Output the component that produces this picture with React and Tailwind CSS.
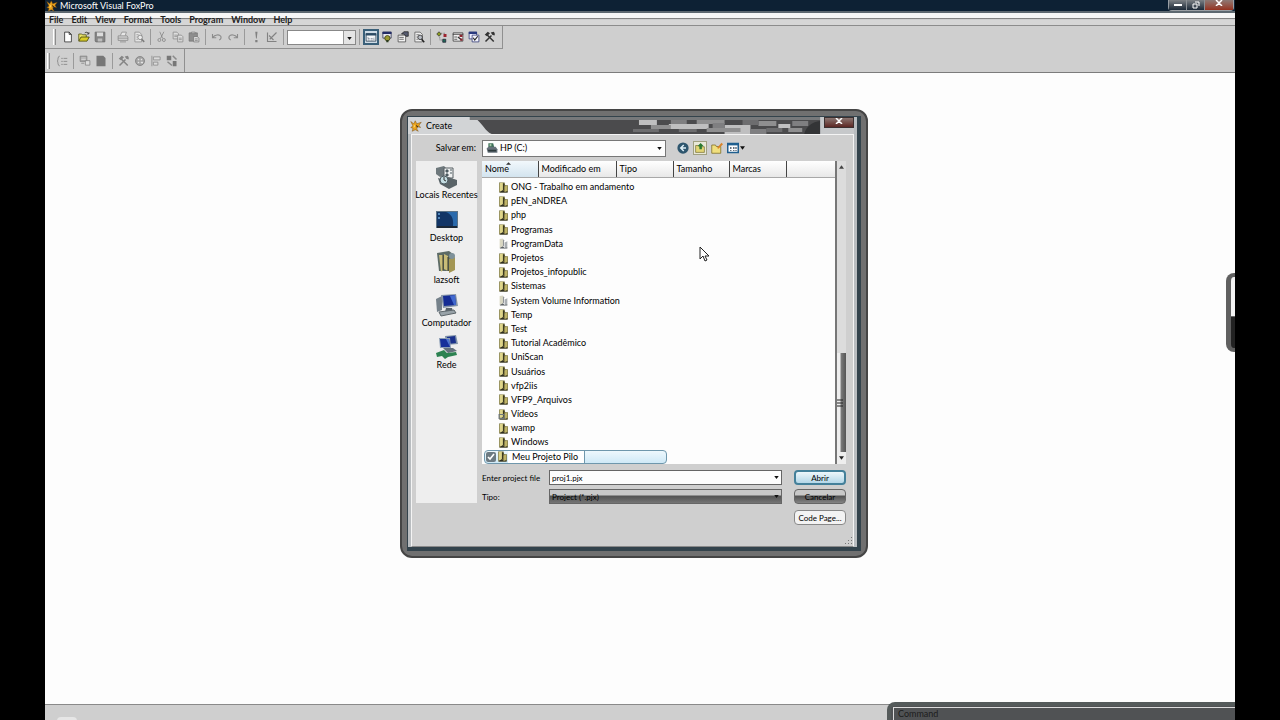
import React from "react";

const menus = ["File", "Edit", "View", "Format", "Tools", "Program", "Window", "Help"];

const folders = [
  { name: "ONG - Trabalho em andamento" },
  { name: "pEN_aNDREA" },
  { name: "php" },
  { name: "Programas" },
  { name: "ProgramData", hidden: true },
  { name: "Projetos" },
  { name: "Projetos_infopublic" },
  { name: "Sistemas" },
  { name: "System Volume Information", hidden: true },
  { name: "Temp" },
  { name: "Test" },
  { name: "Tutorial Acadêmico" },
  { name: "UniScan" },
  { name: "Usuários" },
  { name: "vfp2iis" },
  { name: "VFP9_Arquivos" },
  { name: "Vídeos", media: true },
  { name: "wamp" },
  { name: "Windows" },
];

const columns = [
  { name: "Nome", width: "w-[56px]" },
  { name: "Modificado em", width: "w-[78px]" },
  { name: "Tipo", width: "w-[57px]" },
  { name: "Tamanho", width: "w-[56px]" },
  { name: "Marcas", width: "w-[57px]" },
];

/* Toolbar glyphs, all on a 16x16 grid */
const glyphs = {
  new: <path d="M3.5 1.5h6l3 3v10h-9zM9.5 1.5v3h3" fill="#fff" stroke="#222" />,
  open: (
    <>
      <path d="M1 13V4h4l1 1h5v3" fill="#e8e36a" stroke="#4a4a10" />
      <path d="M1 13.5L4 8h11l-3 5.500z" fill="#d8cc28" stroke="#3c3c08" />
      <path d="M9 2.500c2-1.500 4-1 5 1M14.500 1.500V4H12" fill="none" stroke="#222" />
    </>
  ),
  save: (
    <>
      <path d="M1.500 1.500h13v13h-12l-1-1z" fill="#858585" stroke="#6a6a6a" />
      <path d="M4 2h8v5H4z" fill="#dcdcdc" />
      <path d="M5 10h6v4H5z" fill="#bdbdbd" />
    </>
  ),
  print: (
    <>
      <path d="M4.500 6l2-4.500h6L11 6" fill="#e6e6e6" stroke="#8a8a8a" />
      <path d="M1.500 6.500h12l1 2v4h-13zM1.500 9.500h13M4 14.500h8" fill="#d4d4d4" stroke="#858585" />
    </>
  ),
  preview: (
    <>
      <path d="M2.500 1.500h6l3 3v10h-9zM4.500 5h3M4.500 8h2M4.500 11h2" fill="#e4e4e4" stroke="#8a8a8a" />
      <circle cx="9.500" cy="8.500" r="3" fill="#ececec" stroke="#7a7a7a" />
      <path d="M11.500 11l3.500 3.500" stroke="#7a7a7a" strokeWidth="2" />
    </>
  ),
  cut: (
    <g fill="none" stroke="#828282">
      <path d="M5 1l4 9M10.500 1L6 10" />
      <circle cx="4.500" cy="12" r="2" />
      <circle cx="10.500" cy="12" r="2" />
    </g>
  ),
  copy: (
    <g fill="#dedede" stroke="#868686">
      <path d="M1.500 1.500h5l2 2v7h-7zM3 5.500h4M3 7.500h4" />
      <path d="M7.500 5.500h5l2 2v7h-7zM9 9.500h4M9 11.500h4" />
    </g>
  ),
  paste: (
    <g stroke="#747474">
      <path d="M1.500 2.500h11v11h-11z" fill="#8e8e8e" />
      <path d="M4.500 1.500h5v2h-5z" fill="#ddd" />
      <path d="M7.500 7.500h5l2 2v5h-7zM9 10.500h4M9 12.500h4" fill="#e4e4e4" />
    </g>
  ),
  undo: <path d="M2 4v5h5M2.500 8.500C5 5 11 4 13 7c1 2 0 4-2 5" fill="none" stroke="#8c8c8c" strokeWidth="1.500" />,
  redo: <path d="M14 4v5H9M13.500 8.500C11 5 5 4 3 7c-1 2 0 4 2 5" fill="none" stroke="#8c8c8c" strokeWidth="1.500" />,
  run: <path d="M7 1h3l-1 9H8zM7 12h3v3H7z" fill="#808080" />,
  modify: (
    <g fill="none" stroke="#828282" strokeWidth="1.500">
      <path d="M2 2v12h12" />
      <path d="M14 2L5 11M4 6l6 6M5 14h8" />
    </g>
  ),
  form: (
    <>
      <path d="M1.500 3.500h13v10h-13z" fill="#f4f6f8" stroke="#1d3346" />
      <path d="M1 3h14v3H1z" fill="#2a4a63" />
      <path d="M4 8v4h8V8M4 10h8" fill="none" stroke="#5a6a78" strokeDasharray="1 1" />
    </>
  ),
  data: (
    <>
      <path d="M2.500 1.500h11v8h-11z" fill="#e8e8f0" stroke="#222848" />
      <path d="M2 1h12v3H2z" fill="#232c66" />
      <circle cx="8.500" cy="9.500" r="3.500" fill="#9a9a32" stroke="#3c3c10" />
      <path d="M7 12h3v3H7z" fill="#2c3c20" />
    </>
  ),
  properties: (
    <>
      <path d="M1.500 5.500h10v9h-10zM3 8.500h6M3 11h6" fill="#f2f2f2" stroke="#444" />
      <path d="M6 4l3-3h6v6h-3L9 4z" fill="#555b70" stroke="#222" />
    </>
  ),
  docview: (
    <>
      <path d="M2.500 1.500h7l3 3v10h-10zM4.500 5h4M4.500 8h2M4.500 11h2" fill="#eee" stroke="#555" />
      <circle cx="9.500" cy="8.500" r="3" fill="#b8bcc4" stroke="#222" />
      <path d="M11.500 11l3.500 4" stroke="#222" strokeWidth="2" />
    </>
  ),
  classes: (
    <>
      <path d="M1 4l3-3 3 3-3 3z" fill="#8a9a20" stroke="#333" />
      <path d="M10 4h4v4h-4z" fill="#9c2430" />
      <path d="M9 11h4v4H9z" fill="#1f6a58" stroke="#223" />
      <path d="M5 8v4h3M7 3h5" fill="none" stroke="#555" strokeDasharray="1 1" />
    </>
  ),
  builder: (
    <>
      <path d="M1.500 2.500h13v11h-13zM1 4.500h14" fill="#f0f0f0" stroke="#333" />
      <path d="M3 8h4M3 11h4" stroke="#333" />
      <path d="M8 8l5 4" stroke="#333" strokeWidth="2" />
      <path d="M10 5h4v3h-4zM11 10h3v3h-3z" fill="#8c2630" />
    </>
  ),
  windows: (
    <>
      <path d="M1.500 1.500h10v9h-10z" fill="#eef" stroke="#2a3370" />
      <path d="M1 1h11v3H1z" fill="#2a3a80" />
      <path d="M5.500 5.500h9v9h-9z" fill="#f4f4fc" stroke="#2a3370" />
      <path d="M7 9l2 3 4-5" fill="none" stroke="#222" strokeWidth="1.500" />
    </>
  ),
  tools: (
    <>
      <path d="M2 14L10 6M3 4l10 10" stroke="#333" strokeWidth="2" />
      <path d="M1 5l4-4 3 2-4 4zM9 2l2 3 3 1c1-2 0-4-1-5" fill="#333" />
    </>
  ),
  list: <path d="M5 1.500c-3 0-2 5-3 6.500 1 1.500 0 6.500 3 6.500M7 4.500h2M7 8.500h2M7 12.500h2M10 4.500h5M10 8.500h5M10 12.500h5" fill="none" stroke="#7c7c7c" />,
  frames: (
    <g stroke="#808080">
      <path d="M1.500 1.500h9v7h-9z" fill="#a6a6a6" />
      <path d="M3 4h6M3 6h6" stroke="#ddd" />
      <path d="M8.500 7.500h6v6h-6zM3 11h4" fill="#dcdcdc" />
    </g>
  ),
  page: <path d="M2 1h9l3 3v11H2z" fill="#777" />,
  toolsOff: (
    <>
      <path d="M2 14L10 6M3 4l10 10" stroke="#858585" strokeWidth="2" />
      <path d="M1 5l4-4 3 2-4 4zM9 2l2 3 3 1c1-2 0-4-1-5" fill="#858585" />
    </>
  ),
  palette: (
    <>
      <circle cx="8" cy="8" r="6" fill="#a2a2a2" stroke="#7a7a7a" />
      <path d="M5 5h2v2H5zM9 5h2v2H9zM5 9h2v2H5zM9 9h3v2H9z" fill="#e4e4e4" />
    </>
  ),
  align: <path d="M2.500 1v14M4.500 2.500h9v4h-9zM4.500 9.500h6v4h-6z" fill="#dadada" stroke="#868686" />,
  blocks: (
    <>
      <path d="M1 1h6v6H1zM9 8h5v7H9z" fill="#777" />
      <path d="M9 1l5 5M2 9l6 5" stroke="#8a8a8a" strokeWidth="2" />
    </>
  ),
};

const mainTools = [["new", "open", "save"], ["print", "preview"], ["cut", "copy", "paste"], ["undo", "redo"], ["run", "modify"]];
const viewTools = [["form", "data", "properties", "docview"], ["classes", "builder", "windows", "tools"]];
const reportTools = [["list"], ["frames", "page"], ["toolsOff", "palette", "align", "blocks"]];

function ToolGroup({ names }) {
  return (
    <div className="flex items-center">
      {names.map((name) => (
        <button
          key={name}
          aria-label={name}
          className={name === "form" ? "w-4 h-4 flex items-center justify-center border-2 border-[#3a6079] bg-[#cfdce6]" : "w-4 h-4 flex items-center justify-center"}
        >
          <svg viewBox="0 0 16 16" className="w-3 h-3 shrink-0">{glyphs[name]}</svg>
        </button>
      ))}
    </div>
  );
}

function Separator() {
  return <span className="w-px h-4 mx-[3px] bg-[#9a9a9a]"></span>;
}

function ToolGroups({ groups }) {
  return groups.map((names, index) => (
    <React.Fragment key={index}>
      {index > 0 && <Separator />}
      <ToolGroup names={names} />
    </React.Fragment>
  ));
}

function Grip() {
  return <span className="w-[3px] h-4 mr-1 border-x border-l-white border-r-[#8c8c8c]"></span>;
}

function FoxIcon() {
  return (
    <svg viewBox="0 0 16 16" className="w-3 h-3 shrink-0">
      <path d="M1 2l4 3 2-4 2 4 6-2-3 4 2 3-4-1-1 3 2 3-4-2-4 2 1-4-3-1 3-2z" fill="#e9a21c" stroke="#6b4310" strokeWidth=".6" />
      <path d="M8 6l3 3-2 1z" fill="#3a2510" />
      <path d="M5 6l2 2-2 3z" fill="#ffd96a" />
    </svg>
  );
}

function FolderIcon({ hidden, media }) {
  return (
    <svg viewBox="0 0 20 20" className="w-[11px] h-[11px] shrink-0">
      {!hidden && <path d="M2 1h10l1 5h5v13H2z" fill="#6b663a" />}
      <path d="M3 2l6-1v14l-6 3z" fill={hidden ? "#d9d7c2" : "#ddd48a"} />
      <path d="M9 2l2 2v10l-2 1z" fill={hidden ? "#8f9296" : "#3a3820"} />
      <path d="M12 8l5-2v11l-5 2z" fill={hidden ? "#a9aeb2" : "#bfb366"} />
      <path d="M3 18l6-3 3 3 5-1v2H4z" fill={hidden ? "#5b6064" : "#2f2e22"} />
      {media && <path d="M1 9h11v9H1zM3 11v5h7v-5z" fill="#6d7679" />}
    </svg>
  );
}

function DriveIcon() {
  return (
    <svg viewBox="0 0 20 20" className="w-3 h-3 shrink-0">
      <path d="M4 2h8l2 8H4z" fill="#3c6f58" />
      <path d="M1 11l3-3h12l3 4v6H3z" fill="#66717a" />
      <path d="M3 13h14v3H4z" fill="#2d3a3c" />
      <path d="M6 3h3v4H6z" fill="#a6c8a8" />
    </svg>
  );
}

const places = [
  {
    name: "Locais Recentes",
    icon: (
      <>
        <path d="M1 3l8-2 3 3v6l-7 2-4-3z" fill="#6e787c" />
        <path d="M9 3h9v10H9z" fill="#eef0f0" stroke="#565f63" />
        <path d="M11 5h2v2h-2zM11 9h2v2h-2zM15 5h2M15 8h2" fill="#4d5a60" stroke="#4d5a60" />
        <path d="M3 13l7 2 3-3 9 3v5l-8 4-9-5z" fill="#5a6468" />
        <circle cx="9" cy="15" r="4" fill="#c4dde2" stroke="#4d5a60" />
        <path d="M9 12v3l2 1" fill="none" stroke="#333" />
      </>
    ),
  },
  {
    name: "Desktop",
    icon: (
      <>
        <path d="M1 3h22v17H1z" fill="#5d7487" />
        <path d="M2 4h20v14H2z" fill="#123566" />
        <path d="M11 4c5 2 8 6 7 14h4V4z" fill="#2a6aac" />
        <path d="M2 18h20v2H2z" fill="#1b2735" />
        <path d="M3 5h2v2H3zM3 9h2v2H3z" fill="#5288bb" />
      </>
    ),
  },
  {
    name: "lazsoft",
    icon: (
      <>
        <path d="M2 3l12-2 4 3v17H4z" fill="#5d6b66" />
        <path d="M4 5h4v15l-2 2zM9 4l4 2v15l-4-2z" fill="#c9bc78" />
        <path d="M14 9l6-2v13l-6 3z" fill="#a39654" />
        <path d="M8 5v15M13 7v14" stroke="#3b3b27" />
        <circle cx="17" cy="6" r="3" fill="#7f929a" />
      </>
    ),
  },
  {
    name: "Computador",
    icon: (
      <>
        <path d="M1 6l6-3v14l-5 2z" fill="#75818a" />
        <path d="M6 2l15-1 2 12-15 2z" fill="#8494a8" />
        <path d="M8 3l12-1 1 10-12 1z" fill="#142c94" />
        <path d="M15 3l5-1 1 10h-2z" fill="#4169cf" />
        <path d="M11 15h6l1 4h-8z" fill="#58636c" />
        <path d="M4 19l15-2 2 3-15 3z" fill="#98a2a8" stroke="#5d666b" />
      </>
    ),
  },
  {
    name: "Rede",
    icon: (
      <>
        <path d="M10 1l11-1 2 9-12 1z" fill="#7e91a8" />
        <path d="M12 2l8-1 1 7-9 1z" fill="#1a318c" />
        <path d="M4 3h11l1 10H5z" fill="#8b9db5" />
        <path d="M5 4h9l1 8H6z" fill="#17309a" />
        <path d="M11 4h3l1 8z" fill="#4d74d0" />
        <path d="M8 13h10l4 3-9 2z" fill="#64717c" />
        <path d="M1 18l8-3 3 3 9-1 1 3-9 2-3 2-3-3-5 1z" fill="#2c8251" />
      </>
    ),
  },
];

function PlacesBar() {
  return (
    <nav className="w-[61px] h-[342px] pt-1 bg-[#eeeeee]">
      <div className="h-[213px] flex flex-col">
        {places.map((place) => (
          <button key={place.name} className="flex-1 flex flex-col items-center text-[9px] leading-3 whitespace-nowrap">
            <svg viewBox="0 0 24 24" className="w-6 h-6 shrink-0">{place.icon}</svg>
            {place.name}
          </button>
        ))}
      </div>
    </nav>
  );
}

/* Blurred glass of the dialog caption, seen as coarse blocks */
function CaptionGlass() {
  return (
    <svg viewBox="0 0 448 17" preserveAspectRatio="none" className="absolute inset-0 w-full h-full">
      <rect width="448" height="17" fill="#d2d4d6" />
      <path d="M66 0h354v17H84c-7-3-8-10-18-17z" fill="#4b4b4d" />
      <path d="M62 0h358v3H62z" fill="#77797b" />
      <path d="M232 3h18v5h-18zM262 7h40v5h-40zM318 8h26v9h-26zM372 7h12v4h-12z" fill="#bfbfc0" />
      <path d="M244 8h20v4h-20zM290 3h28v4h-28zM300 11h34v4h-34zM352 4h18v5h-18zM382 11h14v4h-14z" fill="#8f8f90" />
      <path d="M226 12h26v3h-26zM272 12h18v3h-18zM336 3h16v5h-16zM360 11h16v4h-16z" fill="#6d6d6f" />
      <path d="M264 3h16v4h-16zM306 6h12v5h-12zM344 12h16v5h-16zM386 4h16v5h-16z" fill="#7f7f81" />
      <path d="M398 17c2-8 8-12 16-13v13z" fill="#333436" />
      <path d="M414 0h34v17h-34z" fill="#c6c8ca" />
    </svg>
  );
}

function FileList() {
  return (
    <div className="h-[303px] flex bg-[#fdfdfd]">
      <table className="flex-1 h-full table-fixed border-collapse">
        <thead>
          <tr className="h-4 bg-linear-to-b from-white to-[#e8e8e8]">
            {columns.map((col) => (
              <th
                key={col.name}
                className={`${col.width} h-4 p-0 pt-px pl-[3px] text-left font-normal leading-[14px] border-b border-b-[#a8a8a8] border-r border-r-[#444] whitespace-nowrap relative ${col.name === "Nome" ? "bg-linear-to-b from-[#f2f8fc] to-[#d3e4ef]" : ""}`}
              >
                {col.name}
                {col.name === "Nome" && (
                  <svg viewBox="0 0 6 3" className="absolute top-px left-6 w-[5px] h-[3px]">
                    <path d="M0 3l3-3 3 3z" fill="#333" />
                  </svg>
                )}
              </th>
            ))}
            <th className="p-0 border-b border-b-[#a8a8a8]"></th>
          </tr>
        </thead>
        <tbody>
          <tr className="h-[3px]">
            <td colSpan={6} className="p-0 h-[3px]"></td>
          </tr>
          {folders.map((folder) => (
            <tr key={folder.name}>
              <td colSpan={6} className="p-0 pl-4">
                <div className="flex items-center gap-[2px] h-[14px] leading-[14px]">
                  <FolderIcon hidden={folder.hidden} media={folder.media} />
                  {folder.name}
                </div>
              </td>
            </tr>
          ))}
          <tr>
            <td colSpan={6} className="p-0 pl-[2px]">
              <div className="flex items-center w-[183px] h-[14px] border border-[#6f97ac] rounded-sm bg-linear-to-b from-[#eef8fd] to-[#cfe9f7]">
                <input
                  type="checkbox"
                  aria-label="Selecionar pasta"
                  defaultChecked
                  className="w-[10px] h-[10px] mx-px accent-[#6c7a82]"
                />
                <FolderIcon />
                <input
                  aria-label="Nome da pasta"
                  defaultValue="Meu Projeto Pilo"
                  className="w-[77px] h-3 pl-1 bg-white border-r border-[#6f97ac] outline-none"
                />
              </div>
            </td>
          </tr>
        </tbody>
      </table>

      {/* Scrollbar */}
      <div className="w-[11px] flex flex-col bg-[#dcdcdc] border-l-2 border-[#777]">
        <button aria-label="Rolar para cima" className="h-3 flex items-center justify-center">
          <svg viewBox="0 0 6 4" className="w-[5px] h-1"><path d="M0 4l3-4 3 4z" fill="#444" /></svg>
        </button>
        <div className="flex-1"></div>
        <div className="h-[99px] flex items-center bg-linear-to-r from-[#eee] from-30% via-[#777] via-50% to-[#555]">
          <svg viewBox="0 0 6 8" className="w-[6px] h-2"><path d="M0 1h6M0 4h6M0 7h6" stroke="#222" /></svg>
        </div>
        <button aria-label="Rolar para baixo" className="h-3 flex items-center justify-center bg-[#eee]">
          <svg viewBox="0 0 6 4" className="w-[5px] h-1"><path d="M0 0l3 4 3-4z" fill="#222" /></svg>
        </button>
      </div>
    </div>
  );
}

function Arrow() {
  return (
    <svg viewBox="0 0 6 4" className="absolute right-[3px] top-[6px] w-[5px] h-[3px] pointer-events-none">
      <path d="M0 0h6L3 4z" fill="#111" />
    </svg>
  );
}

function CreateDialog() {
  return (
    <div
      role="dialog"
      aria-label="Create"
      className="absolute left-[355px] top-[109px] w-[468px] rounded-xl border-2 border-[#454545] bg-[#707070] p-[5px] text-[9px] text-black"
    >
      <div className="border border-[#33434c] bg-[#b9bdc0] border-r-4 border-b-4 pr-[3px]">
        <header className="relative h-[17px] flex items-center gap-1 pl-[2px] overflow-hidden">
          <CaptionGlass />
          <div className="relative flex items-center gap-1">
            <FoxIcon />
            <h1>Create</h1>
          </div>
          <button aria-label="Fechar" className="relative ml-auto self-start w-[30px] h-[11px] flex justify-center bg-linear-to-b from-[#8a7672] to-[#5c2724] border border-[#3c3030]">
            <svg viewBox="0 0 8 6" className="w-2 h-[6px]"><path d="M1 0l3 3 3-3M1 6l3-3 3 3" stroke="#fff" strokeWidth="1.500" fill="none" /></svg>
          </button>
        </header>

        <div className="ml-[3px] h-[413px] bg-[#cfcfcf] border border-[#f4f4f4] border-b-[#8a8a8a]">
          <div className="flex items-center h-[26px] pl-1">
            <label htmlFor="folder" className="w-[60px] text-right whitespace-nowrap">Salvar em:</label>
            <div className="relative ml-[6px] flex items-center gap-[2px] w-[184px] h-[17px] pl-[3px] bg-[#fdfdfd] border border-[#777]">
              <DriveIcon />
              <select id="folder" className="flex-1 appearance-none outline-none">
                <option>HP (C:)</option>
              </select>
              <Arrow />
            </div>
            <div className="flex items-center gap-1 ml-[11px]">
              <button aria-label="Voltar" className="w-3 h-3">
                <svg viewBox="0 0 16 16"><circle cx="8" cy="8" r="7.500" fill="#2e566e" /><path d="M9 4L5 8l4 4M5 8h7" fill="none" stroke="#dff0f8" strokeWidth="2" /></svg>
              </button>
              <button aria-label="Subir um nível" className="w-[14px] h-[14px] p-px border border-[#a0a080] bg-[#e8e8d8]">
                <svg viewBox="0 0 16 16"><path d="M1 4h5l1 2h8v9H1z" fill="#e3d675" stroke="#66602a" /><path d="M9 0l5 5h-3v5H7V5H4z" fill="#2b7a2f" /></svg>
              </button>
              <button aria-label="Nova pasta" className="w-3 h-3">
                <svg viewBox="0 0 16 16"><path d="M1 4h5l1 2h6v9H1z" fill="#f0df7e" stroke="#7b6a22" /><path d="M8 8l6-7 2 2-6 6z" fill="#d8832a" /></svg>
              </button>
              <button aria-label="Modos de exibição" className="w-5 h-3 flex items-center gap-px">
                <svg viewBox="0 0 16 16" className="w-3 h-3"><path d="M1 2h14v12H1z" fill="#fff" stroke="#1f5f8f" strokeWidth="2" /><path d="M1 3h14" stroke="#1f5f8f" strokeWidth="3" /><path d="M4 7h2v2H4zM8 7h2v2H8zM11 7h2v2h-2zM4 11h2v1H4zM8 11h2v1H8zM11 11h2v1h-2z" fill="#345" /></svg>
                <svg viewBox="0 0 6 4" className="w-[5px] h-1"><path d="M0 0h6L3 4z" fill="#111" /></svg>
              </button>
            </div>
          </div>

          <div className="flex items-start gap-[5px] pl-1 pr-[7px]">
            <PlacesBar />
            <div className="flex-1 flex flex-col">
              <FileList />
              <form className="grid grid-cols-[67px_1fr_52px] items-center gap-y-1 mt-[6px]" onSubmit={(e) => e.preventDefault()}>
                <label htmlFor="project" className="text-[8px]">Enter project file</label>
                <div className="relative h-[15px] mr-3 flex">
                  <input id="project" defaultValue="proj1.pjx" className="w-full px-[2px] bg-[#fdfdfd] border border-[#666] text-[8px] outline-none" />
                  <Arrow />
                </div>
                <button className="h-[15px] rounded-sm border-2 border-[#44809a] bg-linear-to-b from-[#eef7fb] to-[#b4d7e8] text-[8px] leading-[10px]">Abrir</button>

                <label htmlFor="kind" className="text-[8px]">Tipo:</label>
                <div className="relative h-[15px] mr-3 flex">
                  <select id="kind" className="w-full appearance-none px-[2px] text-[8px] leading-3 border border-[#666] outline-none bg-linear-to-b from-[#c8c8c8] from-35% via-[#555] via-50% to-[#757575]">
                    <option>Project (*.pjx)</option>
                  </select>
                  <Arrow />
                </div>
                <button type="button" className="h-[15px] rounded-sm border border-[#666] bg-linear-to-b from-[#c8c8c8] from-35% via-[#555] via-50% to-[#858585] text-[8px] leading-3">Cancelar</button>
                <button type="button" className="col-start-3 mt-[2px] h-[15px] rounded-sm border border-[#888] bg-[#f3f3f3] text-[8px] leading-3 whitespace-nowrap">Code Page...</button>
              </form>
            </div>
          </div>
          <svg viewBox="0 0 8 8" className="w-2 h-2 ml-auto mt-3">
            <path d="M6 0h1v1H6zM3 3h1v1H3zM6 3h1v1H6zM0 6h1v1H0zM3 6h1v1H3zM6 6h1v1H6z" fill="#777" />
          </svg>
        </div>
      </div>
    </div>
  );
}

function App() {
  return (
    <div className="h-screen bg-black px-[45px] font-['Lato','Noto_Sans',sans-serif] text-[9px] text-black">
      <div className="relative h-full flex flex-col overflow-hidden bg-[#fdfdfd]">
        {/* Title bar */}
        <header className="h-[13px] flex items-center gap-[2px] pl-[1px] bg-[#0d2134] text-white border-b-2 border-[#5d6870]">
          <FoxIcon />
          <h1>Microsoft Visual FoxPro</h1>
          <div className="ml-auto mr-[1px] h-[11px] flex border border-t-0 border-[#9a9fa4] rounded-b-sm">
            <button aria-label="Minimizar" className="w-[18px] flex items-center justify-center bg-linear-to-b from-[#7c8084] to-[#1d2a38] border-r border-[#8a8f94]">
              <span className="w-2 h-[2px] bg-white"></span>
            </button>
            <button aria-label="Restaurar" className="w-[18px] flex items-center justify-center bg-linear-to-b from-[#7c8084] to-[#1d2a38] border-r border-[#8a8f94]">
              <svg viewBox="0 0 8 8" className="w-2 h-2"><path d="M3 1h4v4M1 3h4v4H1z" fill="none" stroke="#fff" /></svg>
            </button>
            <button aria-label="Fechar" className="w-[28px] flex justify-center bg-linear-to-b from-[#8c7874] to-[#94301e]">
              <svg viewBox="0 0 8 6" className="w-2 h-[6px]"><path d="M1 0l3 3 3-3M1 6l3-3 3 3" stroke="#fff" strokeWidth="1.500" fill="none" /></svg>
            </button>
          </div>
        </header>

        {/* Menu */}
        <nav className="h-[13px] flex items-center gap-2 pt-px pl-1 bg-linear-to-b from-[#f6f6f6] from-40% via-[#7c7c7c] via-45% to-[#d6d6d6] to-55% border-b border-[#8c8c8c] font-bold text-[#222]">
          {menus.map((menu) => (
            <button key={menu}>{menu}</button>
          ))}
        </nav>

        {/* Toolbars */}
        <div className="h-[47px] flex flex-col items-start bg-[#cfcfcf] border-b border-[#7c7c7c]">
          <div className="h-[23px] flex items-center pl-2 pr-1 border-r border-b border-[#909090]">
            <Grip />
            <ToolGroups groups={mainTools} />
            <Separator />
            <div className="relative w-[69px] h-[15px] flex border border-[#888] bg-white">
              <select aria-label="Banco de dados" className="flex-1 appearance-none outline-none"></select>
              <span className="w-3 bg-[#e4e4e4] border-l border-[#999] pointer-events-none"></span>
              <Arrow />
            </div>
            <Separator />
            <ToolGroups groups={viewTools} />
          </div>
          <div className="h-[23px] flex items-center pl-[2px] pr-1 border-r border-[#909090]">
            <Grip />
            <ToolGroups groups={reportTools} />
          </div>
        </div>

        <main className="flex-1"></main>

        <footer className="h-4 bg-[#cfcfcf] border-t border-[#8a8a8a] pl-3 pt-3 overflow-hidden">
          <div className="w-5 h-1 rounded-t-full bg-[#e6e6e6]"></div>
        </footer>

        <CreateDialog />

        {/* Edge of a docked window */}
        <aside className="absolute right-0 top-[273px] w-[9px] h-[79px] rounded-l-lg border-l-[5px] border-y-4 border-[#606060] bg-linear-to-b from-[#f4f4f4] from-55% to-[#222] to-56%"></aside>

        <section className="absolute right-0 bottom-0 w-[348px] h-[18px] rounded-tl-lg border-t-4 border-l-4 border-[#555b5b] bg-[#505254]">
          <h2 className="mt-px ml-[2px] pl-1 border-t border-l border-[#dcdcdc] leading-3 text-[#1c1c1c]">Command</h2>
        </section>

        {/* Pointer */}
        <svg viewBox="0 0 10 16" className="absolute left-[654px] top-[246px] w-[10px] h-4">
          <path d="M1 1v12l3-3 2 5 2-1-2-4h4z" fill="#fff" stroke="#222" />
        </svg>
      </div>
    </div>
  );
}

export default App;
